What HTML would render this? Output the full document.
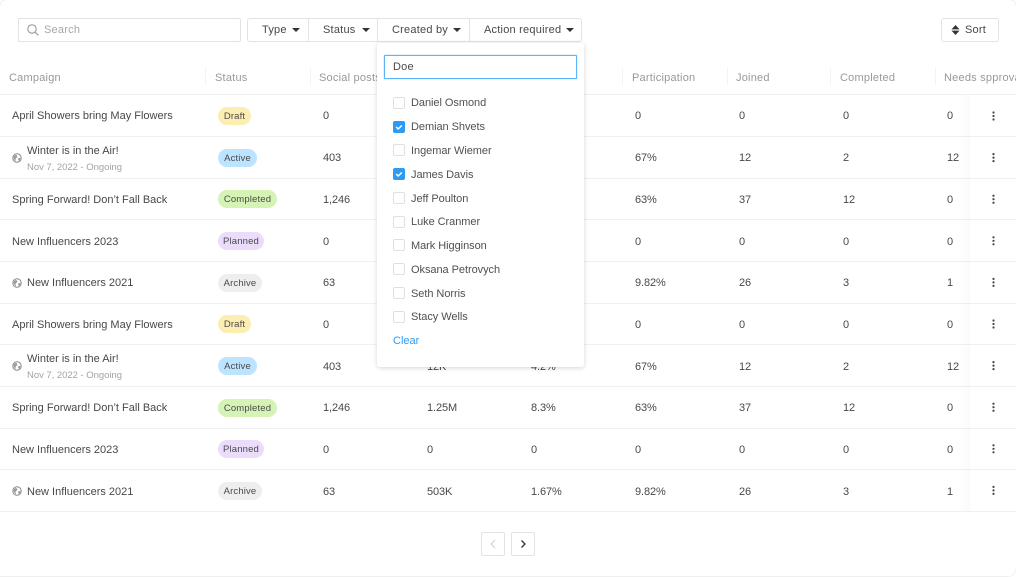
<!DOCTYPE html>
<html><head><meta charset="utf-8">
<style>
*{box-sizing:border-box}
html,body{margin:0;padding:0;width:1024px;height:577px;overflow:hidden;background:#fff}
body{position:relative;font-family:"Liberation Sans",sans-serif;font-size:11px;color:#484848;letter-spacing:.22px}
.a{position:absolute;white-space:nowrap}
.box{position:absolute;border:1px solid #e3e3e3;background:#fff}
.th{position:absolute;top:72px;color:#999;line-height:13px;white-space:nowrap}
.sep{position:absolute;top:68px;width:1px;height:17px;background:#f3f3f3}
.r{position:absolute;left:0;width:1016px;height:42px;border-bottom:1px solid #f0f0f0;letter-spacing:0}
.r span{position:absolute;top:15px;line-height:13px;white-space:nowrap}
.r.o span{top:16px}
.c3,.c4,.c5,.c6,.c7,.c8,.c9{letter-spacing:-.1px}
.c3{left:323px}.c4{left:427px}.c5{left:531px}.c6{left:635px}.c7{left:739px}.c8{left:843px}.c9{left:947px}
.r .p,.r.o .p{left:218px;top:12px;height:18px;line-height:19px;border-radius:9px;font-size:9.5px;text-align:center;color:#4a4a4a;letter-spacing:.15px}
.d{background:#fbeeb0;width:33px}.ac{background:#bce3ff;width:39px}.co{background:#d5f3b5;width:59px}.pl{background:#ecdcfb;width:46px}.ar{background:#eeeeee;width:44px}
.r .n{left:12px}.r .w{left:27px}
.r .t,.r.o .t{left:27px;top:8px}.r .s,.r.o .s{left:27px;top:24px;color:#a3a3a3;font-size:9.5px;letter-spacing:-.03px}
.r svg{position:absolute}
.g{left:12px;top:16px}
.caret{position:absolute;width:0;height:0;border-left:4px solid transparent;border-right:4px solid transparent;border-top:4px solid #333;top:28px}
.cb{position:absolute;left:393px;width:12px;height:12px;border:1px solid #e0e0e0;border-radius:2px;background:#fff}
.cb.on{background:#2d9bf5;border-color:#2d9bf5}
.nm{position:absolute;left:411px;line-height:13px;color:#505050;white-space:nowrap;letter-spacing:-.05px}
</style></head><body>

<svg class="a" style="left:0;top:0" width="1024" height="577" viewBox="0 0 1024 577" fill="none" stroke="#f2f2f2" stroke-width="1"><path d="M0 6Q0 0 6 0M1010 0Q1016 0 1016 6M1016 568Q1016 576.500 1007 576.500"/></svg>

<div class="box" style="left:18px;top:18px;width:223px;height:24px;border-radius:2px"></div>
<svg class="a" style="left:26px;top:23px" width="14" height="14" viewBox="0 0 14 14" fill="none" stroke="#999" stroke-width="1.100"><circle cx="6" cy="6" r="4.200"/><path d="M9.200 9.200 12.400 12.400"/></svg>
<div class="a" style="left:44px;top:24px;line-height:13px;color:#a8a8a8">Search</div>

<div class="box" style="left:247px;top:18px;width:335px;height:24px;border-radius:3px"></div>
<div class="a" style="left:308px;top:18px;width:1px;height:24px;background:#e3e3e3"></div>
<div class="a" style="left:377px;top:18px;width:1px;height:24px;background:#e3e3e3"></div>
<div class="a" style="left:469px;top:18px;width:1px;height:24px;background:#e3e3e3"></div>
<div class="a" style="left:262px;top:24px;line-height:13px">Type</div><div class="caret" style="left:292px"></div>
<div class="a" style="left:323px;top:24px;line-height:13px">Status</div><div class="caret" style="left:362px"></div>
<div class="a" style="left:392px;top:24px;line-height:13px">Created by</div><div class="caret" style="left:453px"></div>
<div class="a" style="left:484px;top:24px;line-height:13px">Action required</div><div class="caret" style="left:566px"></div>

<div class="box" style="left:941px;top:18px;width:58px;height:24px;border-radius:3px"></div>
<svg class="a" style="left:951px;top:24px" width="9" height="12" viewBox="0 0 9 12" fill="#333"><path d="M4.500 1 8.500 5.400H.5zM4.500 11 .5 6.600h8z"/></svg>
<div class="a" style="left:965px;top:24px;line-height:13px">Sort</div>

<div class="th" style="left:9px">Campaign</div>
<div class="th" style="left:215px">Status</div>
<div class="th" style="left:319px">Social posts</div>
<div class="th" style="left:632px">Participation</div>
<div class="th" style="left:736px">Joined</div>
<div class="th" style="left:840px">Completed</div>
<div class="th" style="left:944px;width:72px;overflow:hidden">Needs spproval</div>
<div class="sep" style="left:205px"></div><div class="sep" style="left:310px"></div><div class="sep" style="left:622px"></div><div class="sep" style="left:727px"></div><div class="sep" style="left:830px"></div><div class="sep" style="left:935px"></div>
<div class="a" style="left:0;top:94px;width:1016px;height:1px;background:#f0f0f0"></div>

<div class="r" style="top:95px"><span class="n">April Showers bring May Flowers</span><span class="p d">Draft</span><span class="c3">0</span><span class="c4">0</span><span class="c5">0</span><span class="c6">0</span><span class="c7">0</span><span class="c8">0</span><span class="c9">0</span></div>
<div class="r" style="top:137px"><svg class="g" width="10" height="10" viewBox="0 0 10 10"><circle cx="5" cy="5" r="4.200" fill="#fff" stroke="#888" stroke-width="1"/><path d="M2.500 2.500 4.500 2 5.500 4 3.500 5.500 4 8 2.500 7 1.500 4.500zM6.500 5 8.500 5 7.500 8 6 7z" fill="#999"/></svg><span class="t">Winter is in the Air!</span><span class="s">Nov 7, 2022 - Ongoing</span><span class="p ac">Active</span><span class="c3">403</span><span class="c4">12K</span><span class="c5">4.2%</span><span class="c6">67%</span><span class="c7">12</span><span class="c8">2</span><span class="c9">12</span></div>
<div class="r o" style="top:178px"><span class="n">Spring Forward! Don’t Fall Back</span><span class="p co">Completed</span><span class="c3">1,246</span><span class="c4">1.25M</span><span class="c5">8.3%</span><span class="c6">63%</span><span class="c7">37</span><span class="c8">12</span><span class="c9">0</span></div>
<div class="r o" style="top:220px"><span class="n">New Influencers 2023</span><span class="p pl">Planned</span><span class="c3">0</span><span class="c4">0</span><span class="c5">0</span><span class="c6">0</span><span class="c7">0</span><span class="c8">0</span><span class="c9">0</span></div>
<div class="r" style="top:262px"><svg class="g" width="10" height="10" viewBox="0 0 10 10"><circle cx="5" cy="5" r="4.200" fill="#fff" stroke="#888" stroke-width="1"/><path d="M2.500 2.500 4.500 2 5.500 4 3.500 5.500 4 8 2.500 7 1.500 4.500zM6.500 5 8.500 5 7.500 8 6 7z" fill="#999"/></svg><span class="w">New Influencers 2021</span><span class="p ar">Archive</span><span class="c3">63</span><span class="c4">503K</span><span class="c5">1.67%</span><span class="c6">9.82%</span><span class="c7">26</span><span class="c8">3</span><span class="c9">1</span></div>
<div class="r o" style="top:303px"><span class="n">April Showers bring May Flowers</span><span class="p d">Draft</span><span class="c3">0</span><span class="c4">0</span><span class="c5">0</span><span class="c6">0</span><span class="c7">0</span><span class="c8">0</span><span class="c9">0</span></div>
<div class="r o" style="top:345px"><svg class="g" width="10" height="10" viewBox="0 0 10 10"><circle cx="5" cy="5" r="4.200" fill="#fff" stroke="#888" stroke-width="1"/><path d="M2.500 2.500 4.500 2 5.500 4 3.500 5.500 4 8 2.500 7 1.500 4.500zM6.500 5 8.500 5 7.500 8 6 7z" fill="#999"/></svg><span class="t">Winter is in the Air!</span><span class="s">Nov 7, 2022 - Ongoing</span><span class="p ac">Active</span><span class="c3">403</span><span class="c4">12K</span><span class="c5">4.2%</span><span class="c6">67%</span><span class="c7">12</span><span class="c8">2</span><span class="c9">12</span></div>
<div class="r" style="top:387px"><span class="n">Spring Forward! Don’t Fall Back</span><span class="p co">Completed</span><span class="c3">1,246</span><span class="c4">1.25M</span><span class="c5">8.3%</span><span class="c6">63%</span><span class="c7">37</span><span class="c8">12</span><span class="c9">0</span></div>
<div class="r o" style="top:428px"><span class="n">New Influencers 2023</span><span class="p pl">Planned</span><span class="c3">0</span><span class="c4">0</span><span class="c5">0</span><span class="c6">0</span><span class="c7">0</span><span class="c8">0</span><span class="c9">0</span></div>
<div class="r o" style="top:470px"><svg class="g" width="10" height="10" viewBox="0 0 10 10"><circle cx="5" cy="5" r="4.200" fill="#fff" stroke="#888" stroke-width="1"/><path d="M2.500 2.500 4.500 2 5.500 4 3.500 5.500 4 8 2.500 7 1.500 4.500zM6.500 5 8.500 5 7.500 8 6 7z" fill="#999"/></svg><span class="w">New Influencers 2021</span><span class="p ar">Archive</span><span class="c3">63</span><span class="c4">503K</span><span class="c5">1.67%</span><span class="c6">9.82%</span><span class="c7">26</span><span class="c8">3</span><span class="c9">1</span></div>

<div class="a" style="left:958px;top:95px;width:12px;height:416px;background:linear-gradient(to right,rgba(0,0,0,0),rgba(0,0,0,.02))"></div>
<svg class="a" style="left:970px;top:95px" width="46" height="416" viewBox="0 0 46 416" fill="#444">
<g id="k"><circle cx="23.500" cy="17.500" r="1.100"/><circle cx="23.500" cy="21" r="1.100"/><circle cx="23.500" cy="24.500" r="1.100"/></g>
<use href="#k" y="41.600"/><use href="#k" y="83.200"/><use href="#k" y="124.800"/><use href="#k" y="166.400"/><use href="#k" y="208"/><use href="#k" y="249.600"/><use href="#k" y="291.200"/><use href="#k" y="332.800"/><use href="#k" y="374.400"/>
</svg>

<div class="a" style="left:377px;top:43px;width:207px;height:324px;background:#fff;border-radius:3px;box-shadow:0 1px 5px rgba(0,0,0,.17)"></div>
<div class="box" style="left:384px;top:55px;width:193px;height:24px;border:1px solid #5cb4fb;border-radius:1px;box-shadow:0 0 1px #5cb4fb"></div>
<div class="a" style="left:393px;top:61px;line-height:13px">Doe</div>

<div class="cb" style="top:97px"></div><div class="nm" style="top:97px">Daniel Osmond</div>
<div class="cb on" style="top:121px"></div><div class="nm" style="top:121px">Demian Shvets</div>
<div class="cb" style="top:144px"></div><div class="nm" style="top:145px">Ingemar Wiemer</div>
<div class="cb on" style="top:168px"></div><div class="nm" style="top:169px">James Davis</div>
<div class="cb" style="top:192px"></div><div class="nm" style="top:193px">Jeff Poulton</div>
<div class="cb" style="top:216px"></div><div class="nm" style="top:216px">Luke Cranmer</div>
<div class="cb" style="top:239px"></div><div class="nm" style="top:240px">Mark Higginson</div>
<div class="cb" style="top:263px"></div><div class="nm" style="top:264px">Oksana Petrovych</div>
<div class="cb" style="top:287px"></div><div class="nm" style="top:288px">Seth Norris</div>
<div class="cb" style="top:311px"></div><div class="nm" style="top:311px">Stacy Wells</div>
<svg class="a" style="left:393px;top:121px" width="12" height="12" viewBox="0 0 12 12" fill="none" stroke="#fff" stroke-width="1.500"><path d="M3.200 6 5.200 8 8.800 4.500"/></svg>
<svg class="a" style="left:393px;top:168px" width="12" height="12" viewBox="0 0 12 12" fill="none" stroke="#fff" stroke-width="1.500"><path d="M3.200 6 5.200 8 8.800 4.500"/></svg>
<div class="a" style="left:393px;top:335px;line-height:13px;color:#2d9bf5;letter-spacing:0">Clear</div>

<div class="box" style="left:481px;top:532px;width:24px;height:24px;border-radius:2px"></div>
<svg class="a" style="left:481px;top:532px" width="24" height="24" viewBox="0 0 24 24" fill="none" stroke="#cfcfcf" stroke-width="1"><path d="M14 8 10 12 14 16"/></svg>
<div class="box" style="left:511px;top:532px;width:24px;height:24px;border-radius:2px"></div>
<svg class="a" style="left:511px;top:532px" width="24" height="24" viewBox="0 0 24 24" fill="none" stroke="#333" stroke-width="1.300"><path d="M10.500 8.500 14 12 10.500 15.500"/></svg>

<div class="a" style="left:0;top:576px;width:1008px;height:1px;background:#efefef"></div>
</body></html>
